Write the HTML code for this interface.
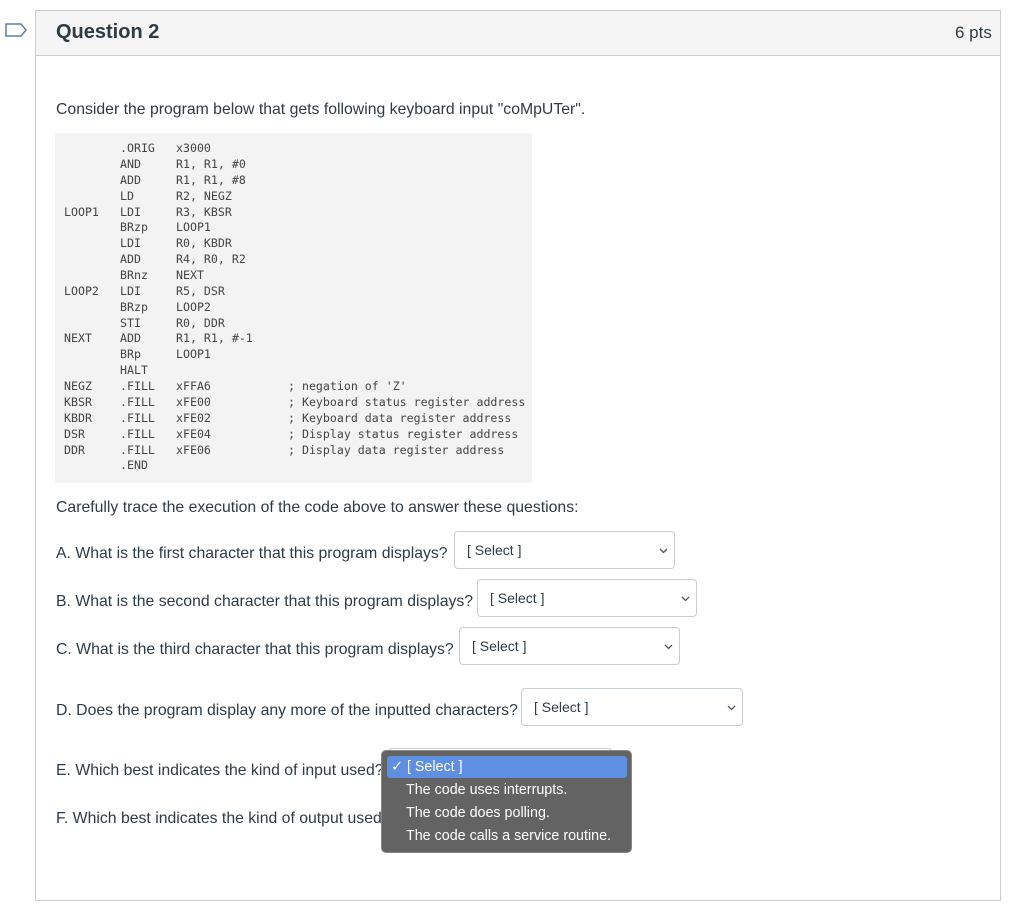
<!DOCTYPE html>
<html><head><style>
body{margin:0;background:#fff;font-family:"Liberation Sans",sans-serif;color:#2d3b45;width:1024px;height:912px;position:relative;overflow:hidden}
.abs{position:absolute}
.box{left:35px;top:10px;width:966px;height:891px;border:1px solid #c7cdd1;box-sizing:border-box}
.hdr{left:36px;top:11px;width:964px;height:44px;background:#f5f5f5;border-bottom:1px solid #c7cdd1}
.t{font-size:15.8px;white-space:nowrap}
.code{left:55px;top:133px;width:477px;height:350px;background:#f3f3f3}
.r{position:absolute;left:0;height:16px;font-family:"DejaVu Sans Mono","Liberation Mono",monospace;font-size:11.6px;color:#444;white-space:pre}
.r b{position:absolute;font-weight:normal;top:0}
.l{left:64px}.m{left:120px}.o{left:176px}.k{left:288px}
.sel{position:absolute;height:38px;border:1px solid #c7cdd1;border-radius:4px;background:#fff;box-sizing:border-box;font-size:14px;color:#2d3b45}
.sel span{position:absolute;left:12px;top:10px}
.sel svg{position:absolute;right:6px;top:16px}
.menu{left:381px;top:750px;width:251px;height:103px;background:#636363;border-radius:5px;border:1px solid #888;box-sizing:border-box;color:#fff;font-size:14.3px}
</style></head><body>
<svg class="abs" style="left:5px;top:23px" width="22" height="14"><path d="M1 1H16L21 7L16 13H1Z" fill="none" stroke="#5a7fa8" stroke-width="1.5"/></svg>
<div class="abs box"></div>
<div class="abs hdr"></div>
<div class="abs" style="left:56px;top:21px;font-size:20px;font-weight:bold;color:#2d3b45">Question 2</div>
<div class="abs" style="left:955px;top:23px;font-size:17px;color:#2d3b45">6 pts</div>
<div class="abs t" style="left:56px;top:101px">Consider the program below that gets following keyboard input "coMpUTer".</div>
<div class="abs code"></div>
<div class="r" style="top:141px"><b class="m">.ORIG</b><b class="o">x3000</b></div>
<div class="r" style="top:157px"><b class="m">AND</b><b class="o">R1, R1, #0</b></div>
<div class="r" style="top:173px"><b class="m">ADD</b><b class="o">R1, R1, #8</b></div>
<div class="r" style="top:189px"><b class="m">LD</b><b class="o">R2, NEGZ</b></div>
<div class="r" style="top:205px"><b class="l">LOOP1</b><b class="m">LDI</b><b class="o">R3, KBSR</b></div>
<div class="r" style="top:220px"><b class="m">BRzp</b><b class="o">LOOP1</b></div>
<div class="r" style="top:236px"><b class="m">LDI</b><b class="o">R0, KBDR</b></div>
<div class="r" style="top:252px"><b class="m">ADD</b><b class="o">R4, R0, R2</b></div>
<div class="r" style="top:268px"><b class="m">BRnz</b><b class="o">NEXT</b></div>
<div class="r" style="top:284px"><b class="l">LOOP2</b><b class="m">LDI</b><b class="o">R5, DSR</b></div>
<div class="r" style="top:300px"><b class="m">BRzp</b><b class="o">LOOP2</b></div>
<div class="r" style="top:316px"><b class="m">STI</b><b class="o">R0, DDR</b></div>
<div class="r" style="top:331px"><b class="l">NEXT</b><b class="m">ADD</b><b class="o">R1, R1, #-1</b></div>
<div class="r" style="top:347px"><b class="m">BRp</b><b class="o">LOOP1</b></div>
<div class="r" style="top:363px"><b class="m">HALT</b></div>
<div class="r" style="top:379px"><b class="l">NEGZ</b><b class="m">.FILL</b><b class="o">xFFA6</b><b class="k">; negation of 'Z'</b></div>
<div class="r" style="top:395px"><b class="l">KBSR</b><b class="m">.FILL</b><b class="o">xFE00</b><b class="k">; Keyboard status register address</b></div>
<div class="r" style="top:411px"><b class="l">KBDR</b><b class="m">.FILL</b><b class="o">xFE02</b><b class="k">; Keyboard data register address</b></div>
<div class="r" style="top:427px"><b class="l">DSR</b><b class="m">.FILL</b><b class="o">xFE04</b><b class="k">; Display status register address</b></div>
<div class="r" style="top:443px"><b class="l">DDR</b><b class="m">.FILL</b><b class="o">xFE06</b><b class="k">; Display data register address</b></div>
<div class="r" style="top:458px"><b class="m">.END</b></div>
<div class="abs t" style="left:56px;top:499px">Carefully trace the execution of the code above to answer these questions:</div>
<div class="abs t" style="left:56px;top:545px">A. What is the first character that this program displays?</div>
<div class="sel" style="left:454px;top:531px;width:221px"><span>[ Select ]</span><svg width="9" height="6"><path d="M1 1L4.5 4.5L8 1" fill="none" stroke="#555" stroke-width="1.3"/></svg></div>
<div class="abs t" style="left:56px;top:593px">B. What is the second character that this program displays?</div>
<div class="sel" style="left:477px;top:579px;width:220px"><span>[ Select ]</span><svg width="9" height="6"><path d="M1 1L4.5 4.5L8 1" fill="none" stroke="#555" stroke-width="1.3"/></svg></div>
<div class="abs t" style="left:56px;top:641px">C. What is the third character that this program displays?</div>
<div class="sel" style="left:459px;top:627px;width:221px"><span>[ Select ]</span><svg width="9" height="6"><path d="M1 1L4.5 4.5L8 1" fill="none" stroke="#555" stroke-width="1.3"/></svg></div>
<div class="abs t" style="left:56px;top:702px">D. Does the program display any more of the inputted characters?</div>
<div class="sel" style="left:521px;top:688px;width:222px"><span>[ Select ]</span><svg width="9" height="6"><path d="M1 1L4.5 4.5L8 1" fill="none" stroke="#555" stroke-width="1.3"/></svg></div>
<div class="abs" style="left:388px;top:748px;width:222px;height:4px;border:1px solid #c7cdd1;border-bottom:none;border-radius:4px 4px 0 0"></div>
<div class="abs t" style="left:56px;top:762px">E. Which best indicates the kind of input used?</div>
<div class="abs t" style="left:56px;top:810px">F. Which best indicates the kind of output used?</div>
<div class="abs menu">
<div class="abs" style="left:5px;top:5px;width:240px;height:22px;background:#5f8fe0;border-radius:3px"></div>
<div class="abs" style="left:9px;top:8px">✓ [ Select ]</div>
<div class="abs" style="left:24px;top:31px">The code uses interrupts.</div>
<div class="abs" style="left:24px;top:54px">The code does polling.</div>
<div class="abs" style="left:24px;top:77px">The code calls a service routine.</div>
</div>
</body></html>
